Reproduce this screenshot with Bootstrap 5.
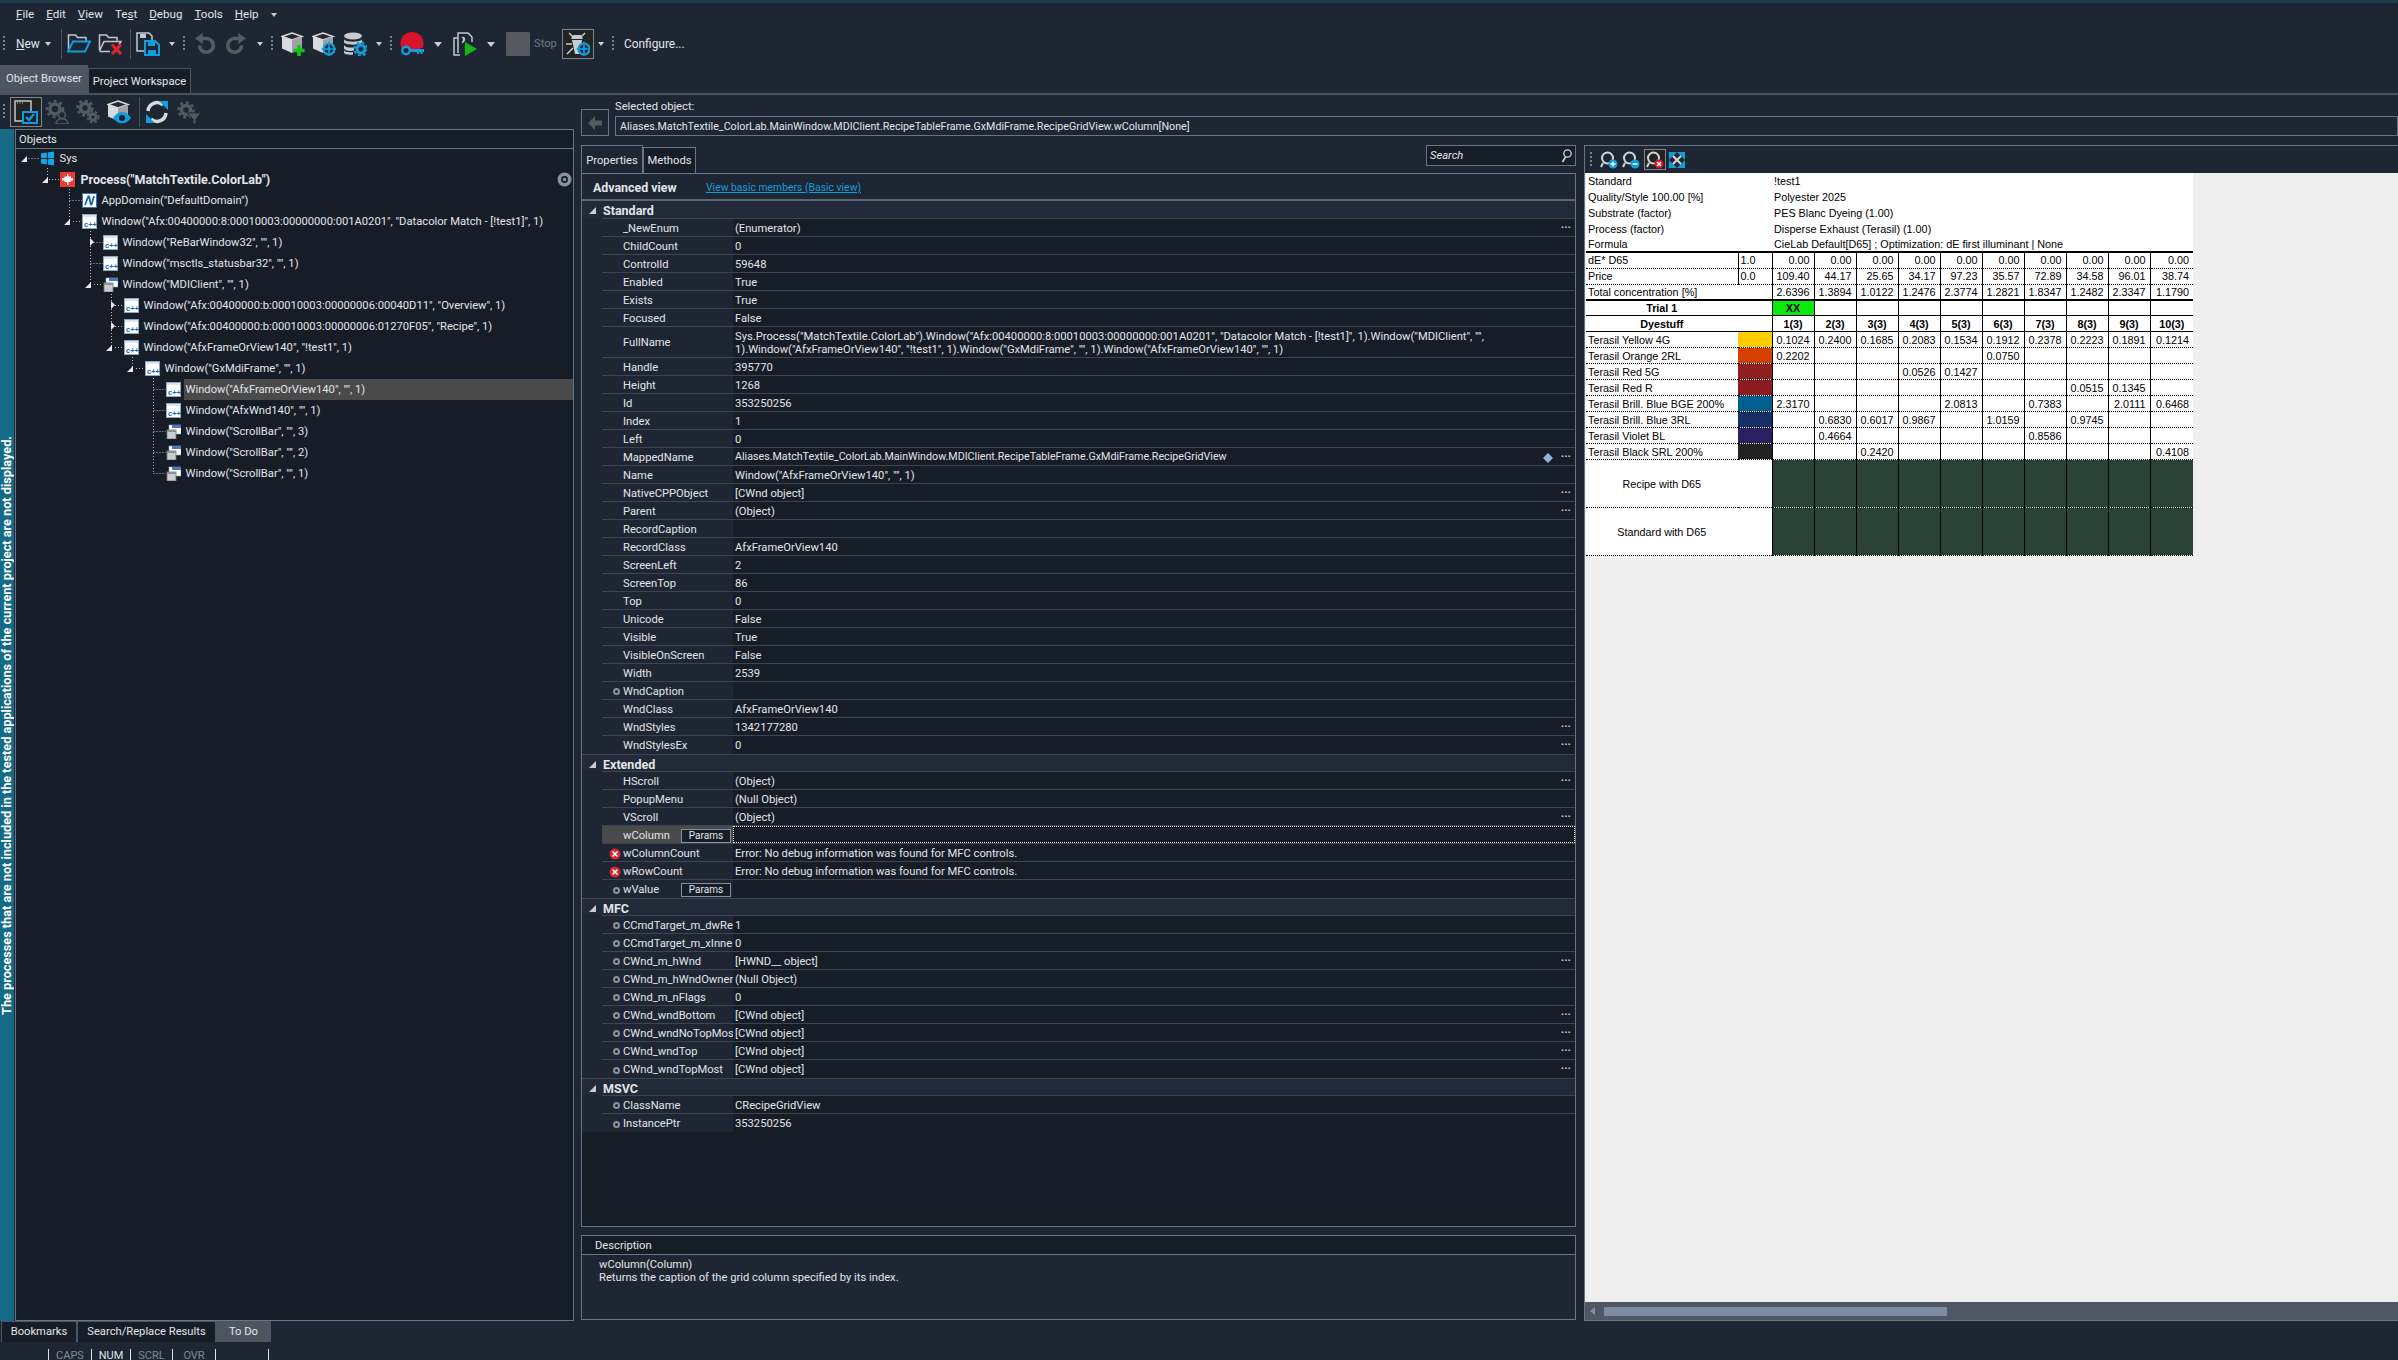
<!doctype html>
<html lang="en"><head><meta charset="utf-8"><title>Object Browser</title>
<link href="https://cdn.jsdelivr.net/npm/bootstrap@5.3.0/dist/css/bootstrap.min.css" rel="stylesheet">
<style>
html,body{height:100%}
body{margin:0;background:#1f2633;color:#e2e5ea;font:11.2px/1.2 Roboto,"Noto Sans",sans-serif;overflow:hidden;height:1360px;width:2398px}
svg{display:block;flex:none}
.strip{height:3px;background:#1f3b4b}
.menu{height:27px;padding-left:16px;padding-bottom:3px;gap:12px;font-size:11.6px}
u{text-underline-offset:1px}
.tools{height:28px;margin-bottom:7px}
.grip{width:2px;height:16px;background-image:linear-gradient(#7b838d 50%,transparent 50%);background-size:2px 4px;flex:none}
.vsep{width:1px;height:30px;background:#4a525c;flex:none}
.caret{width:0;height:0;border:3px solid transparent;border-top:4px solid #c9ced6;border-bottom:0;flex:none}
.caret.big{border-width:5px 4.5px 0;border-color:#c9ced6 transparent transparent}
.ico{width:24px;height:24px}
.l3{margin-left:3px}.l4{margin-left:4px}.l5{margin-left:5px}.l6{margin-left:6px}.l7{margin-left:7px}.l8{margin-left:8px}.l9{margin-left:9px}.l10{margin-left:10px}.l11{margin-left:11px}
.sel-box{width:32px;height:30px;border:1px solid #7d8591;background:#232323;flex:none}
.sel-box.zb{width:22px;height:21px}
.dim{color:#6e7682}
.cfg{font-size:11.9px}
.doc-tabs{height:28px;border-bottom:0;flex-wrap:nowrap}
.nav-tabs.doc-tabs .nav-link,.nav-tabs.btm .nav-link{margin:0;border-radius:0;color:#e2e5ea;padding:0;font-size:11.2px;display:flex;align-items:center;justify-content:center}
.doc-tabs .nav-link.active{background:#4e5560;border:0;width:88px;height:28px;color:#e2e5ea}
.doc-tabs .nav-link.off{background:#161d26;border:1px solid #4b5562;border-bottom:0;width:103px;height:25px;margin-top:3px!important;padding-top:2px}
.rule{height:2px;background:#4a525c}
.main{height:1226px}
.left{width:574px}
.side-tools{height:34px;padding-bottom:1px}
.teal{width:14px;background:#156a85;flex:none}
.teal span{writing-mode:vertical-rl;transform:rotate(180deg);font-weight:700;color:#fff;font-size:12.7px;line-height:14px;white-space:nowrap}
.obj{width:559px;margin-left:1px;height:1192px;background:#161d26;border:1px solid #66758a}
.obj-h{height:19px;border-bottom:1px solid #66758a;padding:2px 0 0 3px;background:#161d26;align-items:center;display:flex}
.tree{position:relative;margin-top:-1px}
.tree .lines{position:absolute;left:0;top:0;pointer-events:none}
.tr{height:21px;gap:4.5px}
.tr svg{width:15px;height:15px}
.t0{padding-left:24px}.t1{padding-left:44px}.t2{padding-left:66px}.t3{padding-left:87px}.t4{padding-left:108px}.t5{padding-left:129px}.t6{padding-left:150px}
.tr span{flex-grow:1;height:21px;line-height:21px}
.tr span.fw-bold{font-size:12.5px;padding-left:1px}
.tr.hl span{background:#4a4a4a;margin-left:-2px;padding-left:2px}
.eye{margin-right:1px;margin-left:auto}
.rgt{margin-left:7px;width:1817px}
.sel-row{height:50px}
.back{width:28px;height:27px;border:1px solid #66758a;margin-top:14px;flex:none}
.sel-col{margin-left:6px;flex-grow:1;padding-top:5px}
.sel-col label{display:block;height:16px;line-height:14px}
.form-control.selinp{height:20px;min-height:0;border-radius:0;background:#1f2633;border:1px solid #66758a;color:#e2e5ea;font-size:10.7px;padding:0 4px;line-height:17px}
.nr{font-size:10.7px}
.prop-col{width:995px;flex:none}
.prop-tabs{height:28px;border-bottom:0;position:relative}
.nav-tabs.prop-tabs .nav-link{margin:0;border-radius:0;padding:0;color:#e2e5ea;font-size:11.2px;display:flex;align-items:center;justify-content:center}
.prop-tabs .nav-link.active{width:62px;height:28px;padding-top:2px;background:#1f2633;border:1px solid #66758a;border-bottom:0;color:#e2e5ea}
.prop-tabs .nav-link.off{width:53px;height:26px;margin-top:2px!important;background:#161d26;border:1px solid #66758a;border-bottom:0}
.search{width:150px;height:21px;background:#161d26;border:1px solid #66758a;padding:0 3px;font-style:italic}
.panel{height:1054px;border:1px solid #66758a;background:#161d26}
.adv{height:27px;background:#1f2633;border-bottom:2px solid #5a6675;padding:4px 0 0 11px}
.adv b{width:113px;font-size:12.4px}
.adv a{color:#0f9ddc;font-size:10.4px}
.sec{background:#1f2633}
.sec-h{height:17px;background:#212a38;padding:2px 0 0 7px;font-weight:700;font-size:12.5px;gap:7px;border-top:1px solid #3d4552}
.sec-h:first-child{border-top:0}
.tri{width:0;height:0;border-style:solid;border-width:0 0 7px 7px;border-color:transparent transparent #c8ccd2 transparent;flex:none}
.rows{margin-left:20px;border-top:1px solid #3d4552}
.pr{height:18px;border-bottom:1px solid #3d4552}
.pr:last-child{border-bottom:0}
.pr.tall{height:31px}
.pn{width:131px;flex:none;padding:2px 2px 0 21px;white-space:nowrap;overflow:hidden;display:flex;align-items:center;height:100%}
.pn.m{padding-left:11px}
.pn.m::before{content:"";width:7px;height:7px;border:2px solid #8a929c;border-radius:50%;margin-right:3px;flex:none}
.pn.x{padding-left:7px}
.pn.x svg{margin-right:2px}
.pn.act{background:#4a4a4a}
.pv{flex-grow:1;min-width:0;background:#161d26;height:100%;padding:2px 0 0 2px;display:flex;align-items:center;white-space:nowrap}
.pv.wrap{line-height:13px}
.pv.focus{border:1px dotted #e8e8e8}
.dots{margin-left:auto;margin-right:4px;color:#c9ced6;font-weight:700;line-height:8px;padding-bottom:2px}
.dia{margin-left:auto}
.dia+.dots{margin-left:8px}
.btn.pb{width:50px;height:14px;margin-left:auto;margin-right:0;padding:0;border-radius:0;border:1px solid #8390a2;background:#161d26;color:#e2e5ea;font-size:10px;line-height:12px;flex:none}
.desc{height:85px;margin-top:8px;border:1px solid #66758a;background:#1f2633}
.desc-h{height:19px;background:#161d26;border-bottom:1px solid #66758a;padding:2px 0 0 13px}
.desc-b{padding:3px 0 0 17px;line-height:13px}
.prev{margin-left:8px;width:814px;height:1176px;border:1px solid #66758a;border-right:0}
.prev-t{height:27px;padding-left:5px;background:#1f2633}
.prev-c{flex-grow:1;background:#efefef;padding-left:1px;min-height:0}
.hs{height:18px;background:#4e5762;padding-left:5px}
.hs i{display:block;width:0;height:0;border:4.5px solid transparent;border-right:5px solid #8792a6;border-left:0}
.hs b{display:block;width:343px;height:9px;background:#7e8ba3;margin-left:9px}
.table.rt{width:607px;table-layout:fixed;border-collapse:collapse;margin:0;background:#fff;color:#000;font:10.8px/14px "Liberation Sans",sans-serif;--bs-table-bg:#fff;--bs-table-color:#000;--bs-border-width:0}
.c152{width:152px}.c34{width:34px}.c42{width:42px}.c43{width:43px}
.rt td{padding:0 2px;height:16px;border-bottom:1px dotted #000;white-space:nowrap;box-shadow:none;overflow:hidden;color:#000;vertical-align:middle}
.rt .nb td{border-bottom:0}
.rt .thk td{border-bottom:2px solid #000;height:15px}
.rt td.n{text-align:right;padding-right:4px;border-left:1px solid #000}
.rt td.c{text-align:center;font-weight:700;border-left:1px solid #000}
.rt td.s{border-right:1px solid #000}
.rt td.h{text-align:center;font-weight:700;padding-right:36px}
.rt tr.sld td{border-bottom:1px solid #000}
.rt td.xx{background:#0be80b}
.rt td.g{background:#2a4235;border-left:1px solid #000}
.rt tr.big td{height:48px}
.rt td.lab{text-align:center;padding-right:36px}
.sw1{background:#ffcc00!important}.sw2{background:#d44000!important}.sw3{background:#8f1f20!important}.sw4{background:#8c1a20!important}.sw5{background:#005f8f!important}.sw6{background:#152f66!important}.sw7{background:#2b1f5f!important}.sw8{background:#222!important}
.btm{height:21px;border-bottom:0;margin-left:1px}
.nav-tabs.btm .nav-link{height:21px;background:#161d26;border:1px solid #4b5562;border-bottom:0}
.nav-tabs.btm .nav-link.active{background:#4e5560;border:0;color:#e2e5ea}
.w76{width:76px}.w139{width:139px}.w55{width:55px}
.status{height:18px;padding-top:7px;padding-left:48px;overflow:hidden}
.status div{height:11px;border-left:1px solid #dfe3e8;text-align:center;line-height:14px;font-size:11px;color:#7f8a99;overflow:visible}
.status .on{color:#dfe3e8}
.w43{width:43px}.w39{width:39px}.w42{width:42px}.w53{width:53px}
.nw{width:24px}.w22{width:22px}
</style></head>
<body class="d-flex flex-column">
<svg width="0" height="0" class="position-absolute">
<defs>
<symbol id="cpp" viewBox="0 0 15 15"><rect x=".5" y=".5" width="14" height="14" fill="#fff" stroke="#8fa6c4"/><rect x="1" y="1" width="13" height="2" fill="#dbe6f3"/><text x="2" y="13" font-family="Liberation Sans,sans-serif" font-size="7.500" font-weight="700" fill="#1668b0">c++</text></symbol>
<symbol id="mdi" viewBox="0 0 15 15"><rect x="3" y="1" width="12" height="9" fill="#fff" stroke="#9aa8b8" stroke-width=".6"/><rect x="6" y="1" width="9" height="3" fill="#4a78c8"/><rect x="1" y="6" width="9" height="9" fill="#c9cdd2" stroke="#777" stroke-width=".8"/><rect x="1" y="6" width="9" height="2" fill="#8e9297"/></symbol>
<symbol id="net" viewBox="0 0 15 15"><rect x=".5" y=".5" width="14" height="14" fill="#fff" stroke="#3d74b8"/><path d="M3 12 6 4c.5-1 1-1 1.300 0l1.300 7c.3 1 .8 1 1.200 0l2.200-8" fill="none" stroke="#1668b0" stroke-width="1.800"/></symbol>
<symbol id="win" viewBox="0 0 15 15"><path d="M1 2.500 6.800 1.600V7H1zM7.800 1.500 14 .6V7H7.800zM1 8h5.800v5.400L1 12.500zM7.800 8H14v6.400l-6.200-.9z" fill="#10a8e6"/></symbol>
<symbol id="proc" viewBox="0 0 15 15"><rect width="15" height="15" fill="#f03a32"/><path d="M7 2h1.500v2.500H11V6h2v2.500h-2V10H8.500v3H7v-3H4.500V8.500H2V6h2.500V4.500H7z" fill="#fff"/></symbol>
<symbol id="err" viewBox="0 0 12 12"><circle cx="6" cy="6" r="5.500" fill="#d7262e"/><path d="m3.500 3.500 5 5m0-5-5 5" stroke="#fff" stroke-width="1.600"/></symbol>
<symbol id="open" viewBox="0 0 24 24"><path d="M1.500 18V3h7l2 2.500H19V9" fill="none" stroke="#c3c8ce" stroke-width="1.500"/><path d="M1 19.500 6 9.500h17l-5 10z" fill="none" stroke="#0f9ddc" stroke-width="2"/></symbol>
<symbol id="close" viewBox="0 0 24 24"><path d="M1.500 18V3h7l2 2.500H19v3M1.500 19 6 9.500h17l-2 3M1.500 19.500H12" fill="none" stroke="#c3c8ce" stroke-width="1.500"/><path d="m14 12.500 9 9.500m0-9.500-9 9.500" stroke="#e2232e" stroke-width="3.200"/></symbol>
<symbol id="save" viewBox="0 0 24 24"><path d="M1 1h12l3 3v5H9v10H1z" fill="none" stroke="#c3c8ce" stroke-width="1.500"/><rect x="4" y="2" width="6" height="4" fill="#c3c8ce"/><path d="M9 9h10l4 4v10H9z" fill="none" stroke="#0f9ddc" stroke-width="2"/><path d="M12 10h7v4h-7zM12 18h8v5h-8z" fill="#0f9ddc"/></symbol>
<symbol id="undo" viewBox="0 0 24 24"><path d="M8 6h5.500a7.500 7.500 0 1 1-7.500 7.500" fill="none" stroke="#555a61" stroke-width="4"/><path d="M9.500 0v12L1 6z" fill="#555a61"/></symbol>
<symbol id="redo" viewBox="0 0 24 24"><path d="M16 6h-5.500a7.500 7.500 0 1 0 7.500 7.500" fill="none" stroke="#555a61" stroke-width="4"/><path d="M14.500 0v12L23 6z" fill="#555a61"/></symbol>
<symbol id="cube" viewBox="0 0 24 24"><path d="M11 1 21 4.500 11 8 1 4.500z" fill="#23272e" stroke="#d8dade" stroke-width="1.500"/><path d="M1 4.500v12L11 21V8z" fill="#d8dade"/><path d="M21 4.500v12L11 21V8z" fill="#9ea2a8"/></symbol>
<g id="tgt"><circle cx="17" cy="17" r="5.500" fill="#1f2633" stroke="#0f9ddc" stroke-width="2.200"/><circle cx="17" cy="17" r="1.800" fill="#0f9ddc"/><path d="M17 9.500v15M9.500 17h15" stroke="#0f9ddc" stroke-width="1.600"/></g>
<g id="gear"><circle cx="17" cy="17" r="4" fill="none" stroke="#0f9ddc" stroke-width="3"/><circle cx="17" cy="17" r="6.500" fill="none" stroke="#0f9ddc" stroke-width="2" stroke-dasharray="2.600 2.500"/></g>
<symbol id="cubeplus" viewBox="0 0 24 24"><use href="#cube"/><path d="M18 13v11M12.500 18.500h11" stroke="#14c214" stroke-width="3.600"/></symbol>
<symbol id="cubetgt" viewBox="0 0 24 24"><use href="#cube"/><use href="#tgt"/></symbol>
<symbol id="db" viewBox="0 0 24 24"><ellipse cx="10" cy="4" rx="9" ry="3.500" fill="#c8cbd0"/><path d="M1 7c0 3.500 18 3.500 18 0v3c0 3.500-18 3.500-18 0zM1 12.500c0 3.500 10 3.500 10 2.500v3.500c-3 1-10 .5-10-2.500zM1 18c0 2 6 2.500 9 2v2.500c-3 .5-9 0-9-2z" fill="#c8cbd0"/><g transform="translate(1 0)"><use href="#gear"/></g></symbol>
<symbol id="key" viewBox="0 0 24 24"><circle cx="12" cy="11.500" r="11.500" fill="#d8142c"/><rect x="1" y="16" width="23" height="8" fill="#1f2633"/><path d="M3 16h18l-3 4H6z" fill="#d8142c"/><circle cx="6" cy="18.500" r="3.700" fill="#1f2633" stroke="#0f9ddc" stroke-width="2.400"/><path d="M9 17h15v3h-1.500v2h-2v-2h-1.500v2h-2v-2H9z" fill="#0f9ddc"/></symbol>
<symbol id="play" viewBox="0 0 24 24"><path d="M5 6H1v17h6M5 21V1h10l4 4v5" fill="none" stroke="#c3c8ce" stroke-width="1.500"/><path d="M9 6c3-2 3 3 1 4l1-4" fill="none" stroke="#c3c8ce" stroke-width="1.500"/><path d="M12 10v14l12-7z" fill="#10b810"/></symbol>
<symbol id="bug" viewBox="0 0 24 24"><path d="M7 3h8l2 4H5z" fill="#c8cbd0"/><path d="M6 8h10l-2 14H9z" fill="#c8cbd0"/><path d="M3 1l4 4M19 1l-4 4M0 12h6M1 22l6-6" stroke="#c8cbd0" stroke-width="1.500"/><use href="#tgt" transform="translate(1 0)"/></symbol>
<symbol id="gu" viewBox="0 0 24 24"><circle cx="10" cy="9" r="5" fill="none" stroke="#555a61" stroke-width="3.500"/><circle cx="10" cy="9" r="8" fill="none" stroke="#555a61" stroke-width="2.500" stroke-dasharray="3 3"/><circle cx="17" cy="15" r="3.500" fill="#1f2633" stroke="#555a61" stroke-width="1.500"/><path d="M11 24c0-7 12-7 12 0z" fill="#1f2633" stroke="#555a61" stroke-width="1.500"/></symbol>
<symbol id="gg" viewBox="0 0 24 24"><circle cx="9" cy="8" r="4.500" fill="none" stroke="#555a61" stroke-width="3.500"/><circle cx="9" cy="8" r="7.500" fill="none" stroke="#555a61" stroke-width="2.500" stroke-dasharray="3 2.800"/><circle cx="17" cy="17" r="3" fill="none" stroke="#555a61" stroke-width="3"/><circle cx="17" cy="17" r="5.500" fill="none" stroke="#555a61" stroke-width="2" stroke-dasharray="2.500 2"/></symbol>
<symbol id="ceye" viewBox="0 0 24 24"><use href="#cube"/><path d="M6 18c5-8 13-8 18 0-5 7-13 7-18 0z" fill="#0f9ddc"/><circle cx="15" cy="18" r="3" fill="#1f2633"/></symbol>
<symbol id="sync" viewBox="0 0 24 24"><path d="M3 11a9 9 0 0 1 15-6" fill="none" stroke="#d8dade" stroke-width="3.500"/><path d="M21 13a9 9 0 0 1-15 6" fill="none" stroke="#d8dade" stroke-width="3.500"/><path d="M14 1h9v9zM10 23H1v-9z" fill="#0f9ddc"/></symbol>
<symbol id="gf" viewBox="0 0 24 24"><circle cx="9" cy="10" r="4.500" fill="none" stroke="#555a61" stroke-width="3.500"/><circle cx="9" cy="10" r="7.500" fill="none" stroke="#555a61" stroke-width="2.500" stroke-dasharray="3 2.800"/><path d="M10 13h14l-5 6v5h-3v-5z" fill="#555a61" stroke="#1f2633"/></symbol>
<symbol id="sel" viewBox="0 0 24 24"><rect x="1" y="1" width="16" height="20" fill="none" stroke="#c3c8ce" stroke-width="1.500"/><path d="M3 3h1M5.500 3h1M8 3h1" stroke="#c3c8ce"/><rect x="9" y="12" width="14" height="11" fill="#161d26" stroke="#0f9ddc" stroke-width="2"/><path d="m12 17 3 3 5-6" fill="none" stroke="#0f9ddc" stroke-width="2.400"/></symbol>
<symbol id="zi" viewBox="0 0 18 18"><circle cx="7.500" cy="7" r="5.500" fill="none" stroke="#d3d6db" stroke-width="2"/><path d="M3 12 1 16" stroke="#d3d6db" stroke-width="2"/></symbol>
</defs></svg>

<div class="strip flex-shrink-0"></div>
<div class="menu d-flex align-items-center flex-shrink-0">
<span><u>F</u>ile</span><span><u>E</u>dit</span><span><u>V</u>iew</span><span>Te<u>s</u>t</span><span><u>D</u>ebug</span><span><u>T</u>ools</span><span><u>H</u>elp</span><i class="caret"></i>
</div>
<div class="tools d-flex align-items-center flex-shrink-0">
<i class="grip l3"></i><span class="l11 nw cfg"><u>N</u>ew</span><i class="caret l5"></i><i class="vsep l10"></i>
<svg class="ico l5"><use href="#open"/></svg><svg class="ico l7"><use href="#close"/></svg><i class="vsep l8"></i>
<svg class="ico l5"><use href="#save"/></svg><i class="caret l9"></i><i class="grip l8"></i>
<svg class="ico l9 w22"><use href="#undo"/></svg><svg class="ico l9 w22"><use href="#redo"/></svg><i class="caret l10"></i><i class="grip l8"></i>
<svg class="ico l8"><use href="#cubeplus"/></svg><svg class="ico l7"><use href="#cubetgt"/></svg><svg class="ico l7"><use href="#db"/></svg><i class="caret l9"></i><i class="grip l8"></i>
<svg class="ico l8"><use href="#key"/></svg><i class="caret big l10"></i>
<svg class="ico l11"><use href="#play"/></svg><i class="caret big l10"></i>
<svg class="ico l11"><rect width="24" height="24" rx="1" fill="#55595f"/></svg><span class="dim l4 nw">Stop</span>
<div class="sel-box l4 d-flex align-items-center justify-content-center"><svg class="ico"><use href="#bug"/></svg></div><i class="caret l4"></i><i class="grip l8"></i>
<span class="l10 cfg">Configure...</span>
</div>
<ul class="nav nav-tabs doc-tabs flex-shrink-0">
<li class="nav-item"><a class="nav-link active" href="#">Object Browser</a></li>
<li class="nav-item"><a class="nav-link off" href="#">Project Workspace</a></li>
</ul>
<div class="rule flex-shrink-0"></div>

<div class="main d-flex flex-shrink-0">
 <div class="left flex-shrink-0">
  <div class="side-tools d-flex align-items-center">
   <i class="grip l3"></i><div class="sel-box l5 d-flex align-items-center justify-content-center"><svg class="ico"><use href="#sel"/></svg></div>
   <svg class="ico l3"><use href="#gu"/></svg><svg class="ico l7"><use href="#gg"/></svg><svg class="ico l7"><use href="#ceye"/></svg><i class="vsep l8"></i>
   <svg class="ico l5"><use href="#sync"/></svg><svg class="ico l8"><use href="#gf"/></svg>
  </div>
  <div class="d-flex">
   <div class="teal d-flex align-items-center justify-content-center"><span>The processes that are not included in the tested applications of the current project are not displayed.</span></div>
   <div class="obj">
    <div class="obj-h">Objects</div>
    <div class="tree">
     <svg class="lines" width="200" height="350"><g fill="none" stroke="#b9bec5" stroke-dasharray="1 2"><path d="M12.500 10.500H24M31.500 20v12M33 31.500h10M53.500 41v32M53.500 52.500H66M57 73.500h9M74.500 83v53M74.500 94.500H87M74.500 115.500H87M78 136.500h9M95.500 146v53M99 157.500h9M99 178.500h9M99 199.500h9M116.500 209v11M120 220.500h9M137.500 230v96M137.500 241.500H150M137.500 262.500H150M137.500 283.500H150M137.500 304.500H150M137.500 325.500H150"/></g><g fill="#e8e8e8"><path d="M5 14 11 8v6zM26 35l6-6v6zM48 77l6-6v6zM69 140l6-6v6zM90 203l6-6v6zM111 224l6-6v6zM74 90l4 4-4 4zM95 153l4 4-4 4zM95 174l4 4-4 4z"/></g></svg>
     <div class="tr t0 d-flex align-items-center"><svg><use href="#win"/></svg><span>Sys</span></div>
     <div class="tr t1 d-flex align-items-center"><svg><use href="#proc"/></svg><span class="fw-bold d-flex align-items-center">Process("MatchTextile.ColorLab")<svg class="eye" width="13" height="13" viewBox="0 0 13 13"><circle cx="6.500" cy="6.500" r="6" fill="#8a929c"/><circle cx="6.500" cy="6.500" r="3" fill="#161d26"/><circle cx="6.500" cy="6.500" r="1.500" fill="#8a929c"/></svg></span></div>
     <div class="tr t2 d-flex align-items-center"><svg><use href="#net"/></svg><span>AppDomain("DefaultDomain")</span></div>
     <div class="tr t2 d-flex align-items-center"><svg><use href="#cpp"/></svg><span>Window("Afx:00400000:8:00010003:00000000:001A0201", "Datacolor Match - [!test1]", 1)</span></div>
     <div class="tr t3 d-flex align-items-center"><svg><use href="#cpp"/></svg><span>Window("ReBarWindow32", "", 1)</span></div>
     <div class="tr t3 d-flex align-items-center"><svg><use href="#cpp"/></svg><span>Window("msctls_statusbar32", "", 1)</span></div>
     <div class="tr t3 d-flex align-items-center"><svg><use href="#mdi"/></svg><span>Window("MDIClient", "", 1)</span></div>
     <div class="tr t4 d-flex align-items-center"><svg><use href="#cpp"/></svg><span>Window("Afx:00400000:b:00010003:00000006:00040D11", "Overview", 1)</span></div>
     <div class="tr t4 d-flex align-items-center"><svg><use href="#cpp"/></svg><span>Window("Afx:00400000:b:00010003:00000006:01270F05", "Recipe", 1)</span></div>
     <div class="tr t4 d-flex align-items-center"><svg><use href="#cpp"/></svg><span>Window("AfxFrameOrView140", "!test1", 1)</span></div>
     <div class="tr t5 d-flex align-items-center"><svg><use href="#cpp"/></svg><span>Window("GxMdiFrame", "", 1)</span></div>
     <div class="tr hl t6 d-flex align-items-center"><svg><use href="#cpp"/></svg><span>Window("AfxFrameOrView140", "", 1)</span></div>
     <div class="tr t6 d-flex align-items-center"><svg><use href="#cpp"/></svg><span>Window("AfxWnd140", "", 1)</span></div>
     <div class="tr t6 d-flex align-items-center"><svg><use href="#mdi"/></svg><span>Window("ScrollBar", "", 3)</span></div>
     <div class="tr t6 d-flex align-items-center"><svg><use href="#mdi"/></svg><span>Window("ScrollBar", "", 2)</span></div>
     <div class="tr t6 d-flex align-items-center"><svg><use href="#mdi"/></svg><span>Window("ScrollBar", "", 1)</span></div>
    </div>
   </div>
  </div>
 </div>

 <div class="rgt flex-shrink-0">
  <div class="sel-row d-flex">
   <div class="back d-flex align-items-center justify-content-center"><svg width="16" height="14" viewBox="0 0 16 14"><path d="M8 0 1 7l7 7V9.500h7v-5H8z" fill="#555a61"/></svg></div>
   <div class="sel-col"><label>Selected object:</label><input class="form-control selinp" readonly value="Aliases.MatchTextile_ColorLab.MainWindow.MDIClient.RecipeTableFrame.GxMdiFrame.RecipeGridView.wColumn[None]"></div>
  </div>
  <div class="d-flex">
   <div class="prop-col">
    <div class="d-flex justify-content-between">
     <ul class="nav nav-tabs prop-tabs">
      <li class="nav-item"><a class="nav-link active" href="#">Properties</a></li>
      <li class="nav-item"><a class="nav-link off" href="#">Methods</a></li>
     </ul>
     <div class="search d-flex align-items-center justify-content-between"><span>Search</span><svg width="12" height="14" viewBox="0 0 12 14"><circle cx="7.500" cy="4.500" r="3.700" fill="none" stroke="#d3d6db" stroke-width="1.300"/><path d="M5.500 8 2.500 13" stroke="#d3d6db" stroke-width="1.600"/></svg></div>
    </div>
    <div class="panel">
     <div class="adv d-flex align-items-center"><b>Advanced view</b><a href="#">View basic members (Basic view)</a></div>
     <div class="sec">
      <div class="sec-h d-flex align-items-center"><i class="tri"></i>Standard</div>
      <div class="rows">
       <div class="pr d-flex"><div class="pn">_NewEnum</div><div class="pv">(Enumerator)<span class="dots">···</span></div></div>
       <div class="pr d-flex"><div class="pn">ChildCount</div><div class="pv">0</div></div>
       <div class="pr d-flex"><div class="pn">ControlId</div><div class="pv">59648</div></div>
       <div class="pr d-flex"><div class="pn">Enabled</div><div class="pv">True</div></div>
       <div class="pr d-flex"><div class="pn">Exists</div><div class="pv">True</div></div>
       <div class="pr d-flex"><div class="pn">Focused</div><div class="pv">False</div></div>
       <div class="pr tall d-flex"><div class="pn">FullName</div><div class="pv wrap">Sys.Process("MatchTextile.ColorLab").Window("Afx:00400000:8:00010003:00000000:001A0201", "Datacolor Match - [!test1]", 1).Window("MDIClient", "",<br>1).Window("AfxFrameOrView140", "!test1", 1).Window("GxMdiFrame", "", 1).Window("AfxFrameOrView140", "", 1)</div></div>
       <div class="pr d-flex"><div class="pn">Handle</div><div class="pv">395770</div></div>
       <div class="pr d-flex"><div class="pn">Height</div><div class="pv">1268</div></div>
       <div class="pr d-flex"><div class="pn">Id</div><div class="pv">353250256</div></div>
       <div class="pr d-flex"><div class="pn">Index</div><div class="pv">1</div></div>
       <div class="pr d-flex"><div class="pn">Left</div><div class="pv">0</div></div>
       <div class="pr d-flex"><div class="pn">MappedName</div><div class="pv"><span class="nr">Aliases.MatchTextile_ColorLab.MainWindow.MDIClient.RecipeTableFrame.GxMdiFrame.RecipeGridView</span><svg class="dia" width="10" height="10" viewBox="0 0 10 10"><path d="M5 0l5 5-5 5-5-5z" fill="#8fb3d9"/></svg><span class="dots">···</span></div></div>
       <div class="pr d-flex"><div class="pn">Name</div><div class="pv">Window("AfxFrameOrView140", "", 1)</div></div>
       <div class="pr d-flex"><div class="pn">NativeCPPObject</div><div class="pv">[CWnd object]<span class="dots">···</span></div></div>
       <div class="pr d-flex"><div class="pn">Parent</div><div class="pv">(Object)<span class="dots">···</span></div></div>
       <div class="pr d-flex"><div class="pn">RecordCaption</div><div class="pv"></div></div>
       <div class="pr d-flex"><div class="pn">RecordClass</div><div class="pv">AfxFrameOrView140</div></div>
       <div class="pr d-flex"><div class="pn">ScreenLeft</div><div class="pv">2</div></div>
       <div class="pr d-flex"><div class="pn">ScreenTop</div><div class="pv">86</div></div>
       <div class="pr d-flex"><div class="pn">Top</div><div class="pv">0</div></div>
       <div class="pr d-flex"><div class="pn">Unicode</div><div class="pv">False</div></div>
       <div class="pr d-flex"><div class="pn">Visible</div><div class="pv">True</div></div>
       <div class="pr d-flex"><div class="pn">VisibleOnScreen</div><div class="pv">False</div></div>
       <div class="pr d-flex"><div class="pn">Width</div><div class="pv">2539</div></div>
       <div class="pr d-flex"><div class="pn m">WndCaption</div><div class="pv"></div></div>
       <div class="pr d-flex"><div class="pn">WndClass</div><div class="pv">AfxFrameOrView140</div></div>
       <div class="pr d-flex"><div class="pn">WndStyles</div><div class="pv">1342177280<span class="dots">···</span></div></div>
       <div class="pr d-flex"><div class="pn">WndStylesEx</div><div class="pv">0<span class="dots">···</span></div></div>
      </div>
      <div class="sec-h d-flex align-items-center"><i class="tri"></i>Extended</div>
      <div class="rows">
       <div class="pr d-flex"><div class="pn">HScroll</div><div class="pv">(Object)<span class="dots">···</span></div></div>
       <div class="pr d-flex"><div class="pn">PopupMenu</div><div class="pv">(Null Object)</div></div>
       <div class="pr d-flex"><div class="pn">VScroll</div><div class="pv">(Object)<span class="dots">···</span></div></div>
       <div class="pr d-flex"><div class="pn act">wColumn<button class="btn pb">Params</button></div><div class="pv focus"></div></div>
       <div class="pr d-flex"><div class="pn x"><svg width="12" height="12"><use href="#err"/></svg>wColumnCount</div><div class="pv">Error: No debug information was found for MFC controls.</div></div>
       <div class="pr d-flex"><div class="pn x"><svg width="12" height="12"><use href="#err"/></svg>wRowCount</div><div class="pv">Error: No debug information was found for MFC controls.</div></div>
       <div class="pr d-flex"><div class="pn m">wValue<button class="btn pb">Params</button></div><div class="pv"></div></div>
      </div>
      <div class="sec-h d-flex align-items-center"><i class="tri"></i>MFC</div>
      <div class="rows">
       <div class="pr d-flex"><div class="pn m">CCmdTarget_m_dwRe</div><div class="pv">1</div></div>
       <div class="pr d-flex"><div class="pn m">CCmdTarget_m_xInne</div><div class="pv">0</div></div>
       <div class="pr d-flex"><div class="pn m">CWnd_m_hWnd</div><div class="pv">[HWND__ object]<span class="dots">···</span></div></div>
       <div class="pr d-flex"><div class="pn m">CWnd_m_hWndOwner</div><div class="pv">(Null Object)</div></div>
       <div class="pr d-flex"><div class="pn m">CWnd_m_nFlags</div><div class="pv">0</div></div>
       <div class="pr d-flex"><div class="pn m">CWnd_wndBottom</div><div class="pv">[CWnd object]<span class="dots">···</span></div></div>
       <div class="pr d-flex"><div class="pn m">CWnd_wndNoTopMost</div><div class="pv">[CWnd object]<span class="dots">···</span></div></div>
       <div class="pr d-flex"><div class="pn m">CWnd_wndTop</div><div class="pv">[CWnd object]<span class="dots">···</span></div></div>
       <div class="pr d-flex"><div class="pn m">CWnd_wndTopMost</div><div class="pv">[CWnd object]<span class="dots">···</span></div></div>
      </div>
      <div class="sec-h d-flex align-items-center"><i class="tri"></i>MSVC</div>
      <div class="rows">
       <div class="pr d-flex"><div class="pn m">ClassName</div><div class="pv">CRecipeGridView</div></div>
       <div class="pr d-flex"><div class="pn m">InstancePtr</div><div class="pv">353250256</div></div>
      </div>
     </div>
    </div>
    <div class="desc">
     <div class="desc-h d-flex align-items-center">Description</div>
     <div class="desc-b">wColumn(Column)<br>Returns the caption of the grid column specified by its index.</div>
    </div>
   </div>
   <div class="prev d-flex flex-column">
    <div class="prev-t d-flex align-items-center">
     <i class="grip"></i>
     <svg class="l8" width="18" height="18" viewBox="0 0 18 18"><use href="#zi"/><circle cx="13" cy="13" r="4.500" fill="#0f9ddc"/><path d="M13 10.500v5M10.500 13h5" stroke="#fff" stroke-width="1.400"/></svg>
     <svg class="l4" width="18" height="18" viewBox="0 0 18 18"><use href="#zi"/><circle cx="13" cy="13" r="4.500" fill="#0f9ddc"/><path d="M10.500 13h5" stroke="#fff" stroke-width="1.400"/></svg>
     <div class="l4 d-flex align-items-center justify-content-center sel-box zb"><svg width="18" height="18" viewBox="0 0 18 18"><use href="#zi"/><circle cx="13" cy="13" r="4.500" fill="#d8142c"/><path d="m11 11 4 4m0-4-4 4" stroke="#fff" stroke-width="1.300"/></svg></div>
     <svg class="l3" width="16" height="16" viewBox="0 0 16 16"><path d="M0 0h8L0 8zM16 0v8l-8-8zM0 16V8l8 8zM16 16H8l8-8z" fill="#0f9ddc"/><path d="m4 4 8 8m0-8-8 8" stroke="#d8dade" stroke-width="2"/></svg>
    </div>
    <div class="prev-c">
     <table class="table rt">
      <colgroup><col class="c152"><col class="c34"><col class="c42"><col class="c42"><col class="c42"><col class="c42"><col class="c42"><col class="c42"><col class="c42"><col class="c42"><col class="c42"><col class="c43"></colgroup>
      <tbody>
      <tr class="nb"><td colspan="2">Standard</td><td colspan="10">!test1</td></tr>
      <tr class="nb"><td colspan="2">Quality/Style 100.00 [%]</td><td colspan="10">Polyester 2025</td></tr>
      <tr class="nb"><td colspan="2">Substrate (factor)</td><td colspan="10">PES Blanc Dyeing (1.00)</td></tr>
      <tr class="nb"><td colspan="2">Process (factor)</td><td colspan="10">Disperse Exhaust (Terasil) (1.00)</td></tr>
      <tr class="thk"><td colspan="2">Formula</td><td colspan="10">CieLab Default[D65] ; Optimization: dE first illuminant | None</td></tr>
      <tr><td class="s">dE* D65</td><td>1.0</td><td class="n">0.00</td><td class="n">0.00</td><td class="n">0.00</td><td class="n">0.00</td><td class="n">0.00</td><td class="n">0.00</td><td class="n">0.00</td><td class="n">0.00</td><td class="n">0.00</td><td class="n">0.00</td></tr>
      <tr><td class="s">Price</td><td>0.0</td><td class="n">109.40</td><td class="n">44.17</td><td class="n">25.65</td><td class="n">34.17</td><td class="n">97.23</td><td class="n">35.57</td><td class="n">72.89</td><td class="n">34.58</td><td class="n">96.01</td><td class="n">38.74</td></tr>
      <tr class="thk"><td colspan="2">Total concentration [%]</td><td class="n">2.6396</td><td class="n">1.3894</td><td class="n">1.0122</td><td class="n">1.2476</td><td class="n">2.3774</td><td class="n">1.2821</td><td class="n">1.8347</td><td class="n">1.2482</td><td class="n">2.3347</td><td class="n">1.1790</td></tr>
      <tr class="sld"><td colspan="2" class="h">Trial 1</td><td class="c xx">XX</td><td class="c"></td><td class="c"></td><td class="c"></td><td class="c"></td><td class="c"></td><td class="c"></td><td class="c"></td><td class="c"></td><td class="c"></td></tr>
      <tr class="sld"><td colspan="2" class="h">Dyestuff</td><td class="c">1(3)</td><td class="c">2(3)</td><td class="c">3(3)</td><td class="c">4(3)</td><td class="c">5(3)</td><td class="c">6(3)</td><td class="c">7(3)</td><td class="c">8(3)</td><td class="c">9(3)</td><td class="c">10(3)</td></tr>
      <tr><td>Terasil Yellow 4G</td><td class="sw1"></td><td class="n">0.1024</td><td class="n">0.2400</td><td class="n">0.1685</td><td class="n">0.2083</td><td class="n">0.1534</td><td class="n">0.1912</td><td class="n">0.2378</td><td class="n">0.2223</td><td class="n">0.1891</td><td class="n">0.1214</td></tr>
      <tr><td>Terasil Orange 2RL</td><td class="sw2"></td><td class="n">0.2202</td><td class="n"></td><td class="n"></td><td class="n"></td><td class="n"></td><td class="n">0.0750</td><td class="n"></td><td class="n"></td><td class="n"></td><td class="n"></td></tr>
      <tr><td>Terasil Red 5G</td><td class="sw3"></td><td class="n"></td><td class="n"></td><td class="n"></td><td class="n">0.0526</td><td class="n">0.1427</td><td class="n"></td><td class="n"></td><td class="n"></td><td class="n"></td><td class="n"></td></tr>
      <tr><td>Terasil Red R</td><td class="sw4"></td><td class="n"></td><td class="n"></td><td class="n"></td><td class="n"></td><td class="n"></td><td class="n"></td><td class="n"></td><td class="n">0.0515</td><td class="n">0.1345</td><td class="n"></td></tr>
      <tr><td>Terasil Brill. Blue BGE 200%</td><td class="sw5"></td><td class="n">2.3170</td><td class="n"></td><td class="n"></td><td class="n"></td><td class="n">2.0813</td><td class="n"></td><td class="n">0.7383</td><td class="n"></td><td class="n">2.0111</td><td class="n">0.6468</td></tr>
      <tr><td>Terasil Brill. Blue 3RL</td><td class="sw6"></td><td class="n"></td><td class="n">0.6830</td><td class="n">0.6017</td><td class="n">0.9867</td><td class="n"></td><td class="n">1.0159</td><td class="n"></td><td class="n">0.9745</td><td class="n"></td><td class="n"></td></tr>
      <tr><td>Terasil Violet BL</td><td class="sw7"></td><td class="n"></td><td class="n">0.4664</td><td class="n"></td><td class="n"></td><td class="n"></td><td class="n"></td><td class="n">0.8586</td><td class="n"></td><td class="n"></td><td class="n"></td></tr>
      <tr><td>Terasil Black SRL 200%</td><td class="sw8"></td><td class="n"></td><td class="n"></td><td class="n">0.2420</td><td class="n"></td><td class="n"></td><td class="n"></td><td class="n"></td><td class="n"></td><td class="n"></td><td class="n">0.4108</td></tr>
      <tr class="big"><td colspan="2" class="lab">Recipe with D65</td><td class="g"></td><td class="g"></td><td class="g"></td><td class="g"></td><td class="g"></td><td class="g"></td><td class="g"></td><td class="g"></td><td class="g"></td><td class="g"></td></tr>
      <tr class="big"><td colspan="2" class="lab">Standard with D65</td><td class="g"></td><td class="g"></td><td class="g"></td><td class="g"></td><td class="g"></td><td class="g"></td><td class="g"></td><td class="g"></td><td class="g"></td><td class="g"></td></tr>
      </tbody>
     </table>
    </div>
    <div class="hs d-flex align-items-center flex-shrink-0"><i></i><b></b></div>
   </div>
  </div>
 </div>
</div>

<ul class="nav nav-tabs btm flex-shrink-0">
<li class="nav-item"><a class="nav-link w76" href="#">Bookmarks</a></li>
<li class="nav-item"><a class="nav-link w139" href="#">Search/Replace Results</a></li>
<li class="nav-item"><a class="nav-link active w55" href="#">To Do</a></li>
</ul>
<div class="status d-flex flex-shrink-0">
<div class="w43">CAPS</div><div class="w39 on">NUM</div><div class="w42">SCRL</div><div class="w43">OVR</div><div class="w53"></div><div></div>
</div>
<script src="https://cdn.jsdelivr.net/npm/bootstrap@5.3.0/dist/js/bootstrap.bundle.min.js"></script>
</body></html>
